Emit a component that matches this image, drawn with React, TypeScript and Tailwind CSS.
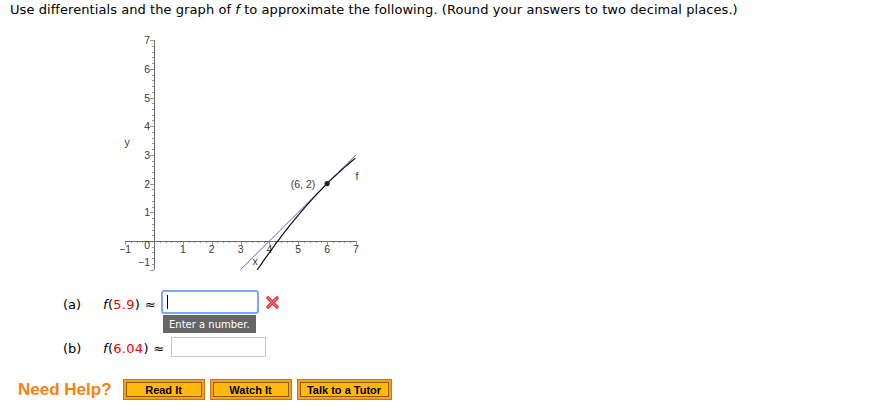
import React from 'react';

const X = (x: number) => 154 + 28.85 * x;
const Y = (y: number) => 241 - 28.7 * y;

function curvePath() {
    const pts: string[] = [];
    for (let x = 3.58; x <= 7.0001; x += 0.05) {
        const t = x - 6;
        const y = 2 + t - 0.1 * t * t;
        pts.push(`${X(x).toFixed(2)},${Y(y).toFixed(2)}`);
    }
    return 'M' + pts.join(' L');
}

function Graph() {
    const yTicks: React.ReactNode[] = [];
    for (let i = -5; i <= 35; i++) {
        const major = i % 5 === 0;
        const yy = Math.round(Y(i / 5)) + 0.5;
        yTicks.push(<line key={'y' + i} x1={154 - (major ? 4 : 2)} y1={yy} x2={154} y2={yy} />);
    }
    const xTicks: React.ReactNode[] = [];
    for (let i = -5; i <= 35; i++) {
        const major = i % 5 === 0;
        const xx = Math.round(X(i / 5)) + 0.5;
        xTicks.push(<line key={'x' + i} x1={xx} y1={241} x2={xx} y2={241 + (major ? 4 : 2)} />);
    }
    const label = { fontFamily: '"Liberation Sans", Arial, sans-serif', fontSize: 10.5, fill: '#3a3a3a' };
    return (
        <svg width={260} height={246} className="block ml-[110px]" viewBox="110 32 260 246">
            <g stroke="#9a9a9a" strokeWidth={1}>
                {yTicks}
                {xTicks}
            </g>
            <g stroke="#6a6a6a" strokeWidth={1}>
                <line x1={X(-1)} y1={241.5} x2={X(7)} y2={241.5} />
                <line x1={154.5} y1={Y(-1)} x2={154.5} y2={Y(7)} />
            </g>
            <g {...label}>
                {[1, 2, 3, 4, 5, 6, 7].map((n) => (
                    <text key={'yl' + n} x={150} y={Y(n) + 4} textAnchor="end">{n}</text>
                ))}
                <text x={150} y={266} textAnchor="end">−1</text>
                <text x={150} y={249} textAnchor="end">0</text>
                <text x={X(-1)} y={253} textAnchor="middle">−1</text>
                {[1, 2, 3, 4, 5, 6, 7].map((n) => (
                    <text key={'xl' + n} x={X(n)} y={253} textAnchor="middle">{n}</text>
                ))}
                <text x={127} y={146} textAnchor="middle">y</text>
                <text x={255} y={265} textAnchor="middle">x</text>
                <text x={357} y={180} textAnchor="middle">f</text>
                <text x={303} y={188} textAnchor="middle">(6, 2)</text>
            </g>
            <line x1={X(3)} y1={Y(-1)} x2={X(7)} y2={Y(3)} stroke="#6a5acd" strokeWidth={1} />
            <path d={curvePath()} fill="none" stroke="#111" strokeWidth={1.2} />
            <circle cx={X(6)} cy={Y(2)} r={2.6} fill="#222" />
        </svg>
    );
}

function RedX() {
    return (
        <svg width={15} height={15} viewBox="0 0 15 15" className="ml-[6px]">
            <path d="M3 3 L12 12 M12 3 L3 12" stroke="#e8424a" strokeWidth={3.6} strokeLinecap="round" />
            <path d="M3.5 3.5 L11.5 11.5 M11.5 3.5 L3.5 11.5" stroke="#f27a80" strokeWidth={1} strokeLinecap="round" />
        </svg>
    );
}

function HelpButton({ label, width }: { label: string; width: string }) {
    return (
        <div className={`${width} h-[21px] border border-[#c97a08] bg-[#f4a21e] p-[2px]`}>
            <div className="h-full border border-[#8e5b06] bg-[#ffb80c] flex items-center justify-center text-[11px] font-bold text-black font-['Liberation_Sans',Arial,sans-serif]">
                {label}
            </div>
        </div>
    );
}

export default function App() {
    return (
        <div className="w-[870px] h-[410px] bg-white text-black font-['DejaVu_Sans',Verdana,sans-serif] text-[13px] overflow-hidden">
            <p className="pl-[10px] pt-[2px] leading-[16px] tracking-[0.07px]">
                Use differentials and the graph of <i>f</i> to approximate the following. (Round your answers to two decimal places.)
            </p>
            <div className="mt-[14px]">
                <Graph />
            </div>

            <div className="mt-[11px] pl-[63px] flex items-center h-[26px]">
                <span className="w-[40px] mt-[5px]">(a)</span>
                <span className="tracking-[0.3px] mt-[5px]"><i>f</i>(<span className="text-[#ee0000]">5.9</span>) ≈</span>
                <div className="relative ml-[5px]">
                    <div className="w-[98px] h-[24px] rounded-[3px] border-2 border-[#7fa6f0] bg-white flex items-center pl-[4px]">
                        <div className="w-px h-[14px] bg-black" />
                    </div>
                    <div className="absolute left-[2px] top-[25px] w-[93px] h-[18px] bg-[#666666] text-white text-[10px] flex items-center justify-center whitespace-nowrap">
                        Enter a number.
                    </div>
                </div>
                <RedX />
            </div>

            <div className="mt-[22px] pl-[63px] flex items-center h-[20px]">
                <span className="w-[40px] mt-[3px]">(b)</span>
                <span className="tracking-[0.3px] mt-[3px]"><i>f</i>(<span className="text-[#ee0000]">6.04</span>) ≈</span>
                <div className="ml-[7px] w-[95px] h-[20px] border border-[#c8c8c8] bg-white" />
            </div>

            <div className="mt-[20px] pl-[18px] flex items-center gap-[5px]">
                <span className="text-[17px] font-bold text-[#f7820f] font-['Liberation_Sans',Arial,sans-serif] mr-[6px]">Need Help?</span>
                <HelpButton label="Read It" width="w-[82px]" />
                <HelpButton label="Watch It" width="w-[82px]" />
                <HelpButton label="Talk to a Tutor" width="w-[95px]" />
            </div>
        </div>
    );
}
